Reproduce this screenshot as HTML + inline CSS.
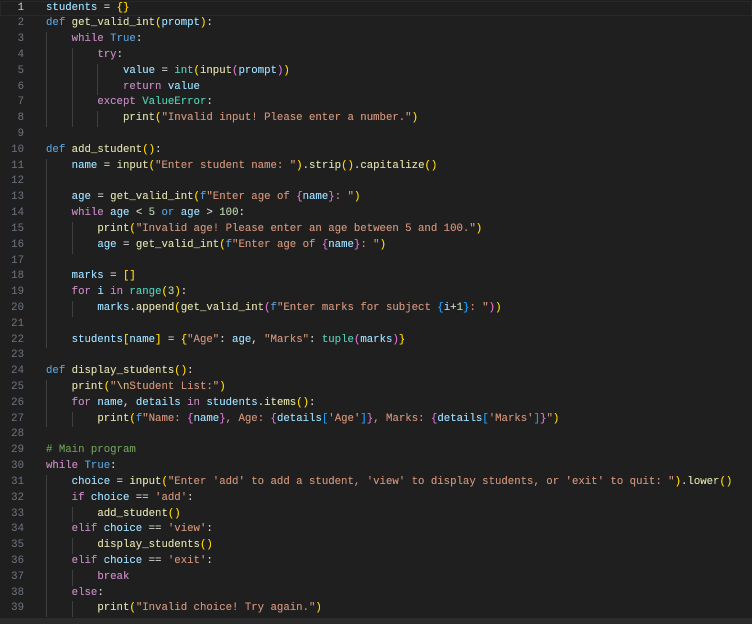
<!DOCTYPE html>
<html><head><meta charset="utf-8"><style>
html,body{margin:0;padding:0;background:#1f1f1f;width:752px;height:624px;overflow:hidden}
#ed{position:absolute;left:0;top:0.5px;width:752px;font-family:"Liberation Mono",monospace;font-size:10.7px;color:#d4d4d4}
.l{position:relative;height:15.82px;line-height:15.82px;white-space:pre}
.ln{position:absolute;left:0;width:24px;text-align:right;color:#6e7681}
.cd{position:absolute;left:46px;text-shadow:0 0 0.3px currentColor}
.cur{box-shadow:inset 0 0 0 1px #282828}
.cur .ln{color:#cccccc}
.g{position:absolute;top:0;bottom:0;width:1px;background:#404040}
.k{color:#569cd6}.c{color:#c586c0}.v{color:#9cdcfe}.f{color:#dcdcaa}.s{color:#ce9178}.t{color:#4ec9b0}.n{color:#b5cea8}.m{color:#6a9955}.e{color:#d7ba7d}
.b1{color:#ffd700}.b2{color:#da70d6}.b3{color:#179fff}
#bar{position:absolute;left:0;top:618px;width:752px;height:6px;background:#2b2b2b}
</style></head><body><div id="ed">
<div class="l cur"><span class="ln">1</span><span class="cd"><span class="v">students</span> = <span class="b1">{}</span></span></div>
<div class="l"><span class="ln">2</span><span class="cd"><span class="k">def</span> <span class="f">get_valid_int</span><span class="b1">(</span><span class="v">prompt</span><span class="b1">)</span>:</span></div>
<div class="l"><span class="ln">3</span><i class="g" style="left:46px"></i><span class="cd">    <span class="c">while</span> <span class="k">True</span>:</span></div>
<div class="l"><span class="ln">4</span><i class="g" style="left:46px"></i><i class="g" style="left:72px"></i><span class="cd">        <span class="c">try</span>:</span></div>
<div class="l"><span class="ln">5</span><i class="g" style="left:46px"></i><i class="g" style="left:72px"></i><i class="g" style="left:97px"></i><span class="cd">            <span class="v">value</span> = <span class="t">int</span><span class="b1">(</span><span class="f">input</span><span class="b2">(</span><span class="v">prompt</span><span class="b2">)</span><span class="b1">)</span></span></div>
<div class="l"><span class="ln">6</span><i class="g" style="left:46px"></i><i class="g" style="left:72px"></i><i class="g" style="left:97px"></i><span class="cd">            <span class="c">return</span> <span class="v">value</span></span></div>
<div class="l"><span class="ln">7</span><i class="g" style="left:46px"></i><i class="g" style="left:72px"></i><span class="cd">        <span class="c">except</span> <span class="t">ValueError</span>:</span></div>
<div class="l"><span class="ln">8</span><i class="g" style="left:46px"></i><i class="g" style="left:72px"></i><i class="g" style="left:97px"></i><span class="cd">            <span class="f">print</span><span class="b1">(</span><span class="s">"Invalid input! Please enter a number."</span><span class="b1">)</span></span></div>
<div class="l"><span class="ln">9</span></div>
<div class="l"><span class="ln">10</span><span class="cd"><span class="k">def</span> <span class="f">add_student</span><span class="b1">()</span>:</span></div>
<div class="l"><span class="ln">11</span><i class="g" style="left:46px"></i><span class="cd">    <span class="v">name</span> = <span class="f">input</span><span class="b1">(</span><span class="s">"Enter student name: "</span><span class="b1">)</span>.<span class="f">strip</span><span class="b1">()</span>.<span class="f">capitalize</span><span class="b1">()</span></span></div>
<div class="l"><span class="ln">12</span><i class="g" style="left:46px"></i></div>
<div class="l"><span class="ln">13</span><i class="g" style="left:46px"></i><span class="cd">    <span class="v">age</span> = <span class="f">get_valid_int</span><span class="b1">(</span><span class="k">f</span><span class="s">"Enter age of </span><span class="b2">{</span><span class="v">name</span><span class="b2">}</span><span class="s">: "</span><span class="b1">)</span></span></div>
<div class="l"><span class="ln">14</span><i class="g" style="left:46px"></i><span class="cd">    <span class="c">while</span> <span class="v">age</span> &lt; <span class="n">5</span> <span class="k">or</span> <span class="v">age</span> &gt; <span class="n">100</span>:</span></div>
<div class="l"><span class="ln">15</span><i class="g" style="left:46px"></i><i class="g" style="left:72px"></i><span class="cd">        <span class="f">print</span><span class="b1">(</span><span class="s">"Invalid age! Please enter an age between 5 and 100."</span><span class="b1">)</span></span></div>
<div class="l"><span class="ln">16</span><i class="g" style="left:46px"></i><i class="g" style="left:72px"></i><span class="cd">        <span class="v">age</span> = <span class="f">get_valid_int</span><span class="b1">(</span><span class="k">f</span><span class="s">"Enter age of </span><span class="b2">{</span><span class="v">name</span><span class="b2">}</span><span class="s">: "</span><span class="b1">)</span></span></div>
<div class="l"><span class="ln">17</span><i class="g" style="left:46px"></i></div>
<div class="l"><span class="ln">18</span><i class="g" style="left:46px"></i><span class="cd">    <span class="v">marks</span> = <span class="b1">[]</span></span></div>
<div class="l"><span class="ln">19</span><i class="g" style="left:46px"></i><span class="cd">    <span class="c">for</span> <span class="v">i</span> <span class="c">in</span> <span class="t">range</span><span class="b1">(</span><span class="n">3</span><span class="b1">)</span>:</span></div>
<div class="l"><span class="ln">20</span><i class="g" style="left:46px"></i><i class="g" style="left:72px"></i><span class="cd">        <span class="v">marks</span>.<span class="f">append</span><span class="b1">(</span><span class="f">get_valid_int</span><span class="b2">(</span><span class="k">f</span><span class="s">"Enter marks for subject </span><span class="b3">{</span><span class="v">i</span>+<span class="n">1</span><span class="b3">}</span><span class="s">: "</span><span class="b2">)</span><span class="b1">)</span></span></div>
<div class="l"><span class="ln">21</span><i class="g" style="left:46px"></i></div>
<div class="l"><span class="ln">22</span><i class="g" style="left:46px"></i><span class="cd">    <span class="v">students</span><span class="b1">[</span><span class="v">name</span><span class="b1">]</span> = <span class="b1">{</span><span class="s">"Age"</span>: <span class="v">age</span>, <span class="s">"Marks"</span>: <span class="t">tuple</span><span class="b2">(</span><span class="v">marks</span><span class="b2">)</span><span class="b1">}</span></span></div>
<div class="l"><span class="ln">23</span></div>
<div class="l"><span class="ln">24</span><span class="cd"><span class="k">def</span> <span class="f">display_students</span><span class="b1">()</span>:</span></div>
<div class="l"><span class="ln">25</span><i class="g" style="left:46px"></i><span class="cd">    <span class="f">print</span><span class="b1">(</span><span class="s">"</span><span class="e">\n</span><span class="s">Student List:"</span><span class="b1">)</span></span></div>
<div class="l"><span class="ln">26</span><i class="g" style="left:46px"></i><span class="cd">    <span class="c">for</span> <span class="v">name</span>, <span class="v">details</span> <span class="c">in</span> <span class="v">students</span>.<span class="f">items</span><span class="b1">()</span>:</span></div>
<div class="l"><span class="ln">27</span><i class="g" style="left:46px"></i><i class="g" style="left:72px"></i><span class="cd">        <span class="f">print</span><span class="b1">(</span><span class="k">f</span><span class="s">"Name: </span><span class="b2">{</span><span class="v">name</span><span class="b2">}</span><span class="s">, Age: </span><span class="b2">{</span><span class="v">details</span><span class="b3">[</span><span class="s">'Age'</span><span class="b3">]</span><span class="b2">}</span><span class="s">, Marks: </span><span class="b2">{</span><span class="v">details</span><span class="b3">[</span><span class="s">'Marks'</span><span class="b3">]</span><span class="b2">}</span><span class="s">"</span><span class="b1">)</span></span></div>
<div class="l"><span class="ln">28</span></div>
<div class="l"><span class="ln">29</span><span class="cd"><span class="m"># Main program</span></span></div>
<div class="l"><span class="ln">30</span><span class="cd"><span class="c">while</span> <span class="k">True</span>:</span></div>
<div class="l"><span class="ln">31</span><i class="g" style="left:46px"></i><span class="cd">    <span class="v">choice</span> = <span class="f">input</span><span class="b1">(</span><span class="s">"Enter 'add' to add a student, 'view' to display students, or 'exit' to quit: "</span><span class="b1">)</span>.<span class="f">lower</span><span class="b1">()</span></span></div>
<div class="l"><span class="ln">32</span><i class="g" style="left:46px"></i><span class="cd">    <span class="c">if</span> <span class="v">choice</span> == <span class="s">'add'</span>:</span></div>
<div class="l"><span class="ln">33</span><i class="g" style="left:46px"></i><i class="g" style="left:72px"></i><span class="cd">        <span class="f">add_student</span><span class="b1">()</span></span></div>
<div class="l"><span class="ln">34</span><i class="g" style="left:46px"></i><span class="cd">    <span class="c">elif</span> <span class="v">choice</span> == <span class="s">'view'</span>:</span></div>
<div class="l"><span class="ln">35</span><i class="g" style="left:46px"></i><i class="g" style="left:72px"></i><span class="cd">        <span class="f">display_students</span><span class="b1">()</span></span></div>
<div class="l"><span class="ln">36</span><i class="g" style="left:46px"></i><span class="cd">    <span class="c">elif</span> <span class="v">choice</span> == <span class="s">'exit'</span>:</span></div>
<div class="l"><span class="ln">37</span><i class="g" style="left:46px"></i><i class="g" style="left:72px"></i><span class="cd">        <span class="c">break</span></span></div>
<div class="l"><span class="ln">38</span><i class="g" style="left:46px"></i><span class="cd">    <span class="c">else</span>:</span></div>
<div class="l"><span class="ln">39</span><i class="g" style="left:46px"></i><i class="g" style="left:72px"></i><span class="cd">        <span class="f">print</span><span class="b1">(</span><span class="s">"Invalid choice! Try again."</span><span class="b1">)</span></span></div>
</div><div id="bar"></div></body></html>
